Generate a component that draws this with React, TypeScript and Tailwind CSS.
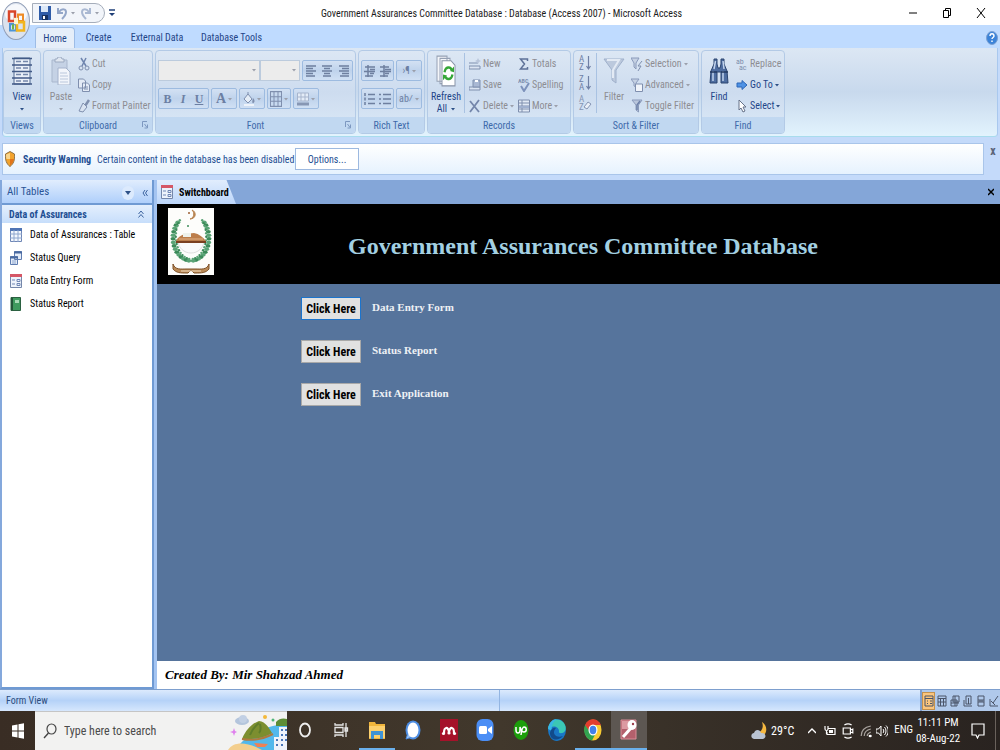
import type { ReactNode } from 'react';
import clsx from 'clsx';

const INK = '#7f8fae';

function Icon({ size = 'w-3 h-3.5', box = '0 0 12 14', children }: { size?: string; box?: string; children: ReactNode }) {
  return (
    <svg className={clsx('shrink-0', size)} viewBox={box} preserveAspectRatio="none" fill="none" aria-hidden="true">
      {children}
    </svg>
  );
}

function Caret({ dim = false }: { dim?: boolean }) {
  return (
    <svg className="w-1 h-1 shrink-0" viewBox="0 0 4 4" aria-hidden="true">
      <path d="M0 1h4L2 3.5z" fill={dim ? '#9b9fab' : '#2c4f86'} />
    </svg>
  );
}

function Launcher() {
  return (
    <button aria-label="More options" className="absolute right-1 top-1">
      <Icon size="w-1.5 h-2" box="0 0 6 8">
        <path d="M.5 6V.5H5M2.5 3l2.500 3.500M5.500 3.500V7H2.500" stroke="#7d98c0" />
      </Icon>
    </button>
  );
}

function Group({ label, width, launcher, children }: { label: string; width: string; launcher?: boolean; children: ReactNode }) {
  return (
    <section
      aria-label={label}
      className={clsx('flex flex-col shrink-0 border border-[#b3cae6] rounded-sm overflow-hidden bg-gradient-to-b from-[#dce7f4] via-[#cddcef] to-[#dbe9f7]', width)}
    >
      <div className="flex flex-1 min-h-0 pt-0.5">{children}</div>
      <div className="relative h-4 bg-[#c1d8f1] text-center text-[#3e6aaa] leading-[17px]">
        {label}
        {launcher && <Launcher />}
      </div>
    </section>
  );
}

function BigButton({ label, width, dim, caret, children }: { label: string; width: string; dim?: boolean; caret?: boolean; children: ReactNode }) {
  return (
    <button className={clsx('flex flex-col items-center pt-0.5', width, dim ? 'text-[#8d8d92]' : 'text-[#1f4588]')}>
      <span className="flex h-8 items-center">{children}</span>
      <span className="leading-5">{label}</span>
      {caret && <span className="flex h-1 items-center"><Caret dim={dim} /></span>}
    </button>
  );
}

function SmallButton({ label, icon, dim = true, caret }: { label: string; icon: ReactNode; dim?: boolean; caret?: boolean }) {
  return (
    <button className={clsx('flex items-center gap-0.5 h-[21px] whitespace-nowrap', dim ? 'text-[#8d8d92]' : 'text-[#1f4588]')}>
      {icon}
      {label}
      {caret && <Caret dim={dim} />}
    </button>
  );
}

function ToolBox({ width, tools, caret }: { width: string; tools: { name: string; art: ReactNode }[]; caret?: boolean }) {
  return (
    <div className={clsx('flex h-[21px] items-center justify-around border border-[#9dbbe0] rounded-xs bg-gradient-to-b from-[#d3e1f3] via-[#bfd3ec] to-[#d0e0f4]', width)}>
      {tools.map((t) => (
        <button key={t.name} aria-label={t.name} className="flex items-center gap-0.5 text-[#6c7fa3]">
          {t.art}
          {caret && <Caret dim />}
        </button>
      ))}
    </div>
  );
}

function Combo({ label, width }: { label: string; width: string }) {
  return (
    <div className={clsx('relative', width)}>
      <select aria-label={label} disabled className="appearance-none w-full h-[21px] bg-[#ececec] border border-[#bccbdd]" />
      <span className="pointer-events-none absolute right-1 top-2"><Caret dim /></span>
    </div>
  );
}

const lines = (d: string) => (
  <Icon>
    <path d={d} stroke="#6e7f9f" strokeWidth="1.500" />
  </Icon>
);

const alignTools = [
  { name: 'Align left', art: lines('M1 2h10M1 4.500h7M1 7h10M1 9.500h7M1 12h9') },
  { name: 'Center', art: lines('M1 2h10M3 4.500h6M1 7h10M3 9.500h6M2 12h8') },
  { name: 'Align right', art: lines('M1 2h10M4 4.500h7M1 7h10M4 9.500h7M2 12h9') },
];

const indentTools = [
  { name: 'Decrease indent', art: lines('M4 1v12M1 3h10M6 5.500h5M0 7.500h11M6 9.500h4M1 12h8') },
  { name: 'Increase indent', art: lines('M5 1v12M1 3h9M6 5.500h6M1 7.500h11M6 9.500h4M1 12h8') },
];

const listTools = [
  { name: 'Numbering', art: lines('M1 1v3M1 5.500v3M1 10v3M4 2.500h7M4 7h7M4 11.500h7') },
  { name: 'Bullets', art: lines('M0 2.500h2M0 7h2M0 11.500h2M4 2.500h8M4 7h8M4 11.500h8') },
];

function FontGroup() {
  return (
    <Group label="Font" width="w-[201px]" launcher>
      <div className="flex flex-col gap-[7px] pl-0.5 pt-[7px]">
        <div className="flex gap-0.5">
          <div className="flex">
            <Combo label="Font" width="w-[102px]" />
            <Combo label="Font size" width="w-10" />
          </div>
          <ToolBox width="w-[51px]" tools={alignTools} />
        </div>
        <div className="flex gap-0.5">
          <ToolBox
            width="w-[51px]"
            tools={[
              { name: 'Bold', art: <span className="font-['Liberation_Serif',serif] text-xs font-bold">B</span> },
              { name: 'Italic', art: <span className="font-['Liberation_Serif',serif] text-xs font-bold italic">I</span> },
              { name: 'Underline', art: <span className="font-['Liberation_Serif',serif] text-xs font-bold underline">U</span> },
            ]}
          />
          <ToolBox caret width="w-[26px]" tools={[{ name: 'Font color', art: <span className="font-['Liberation_Serif',serif] text-sm leading-4 font-bold">A</span> }]} />
          <ToolBox
            caret
            width="w-[26px]"
            tools={[{
              name: 'Fill color',
              art: (
                <Icon>
                  <path d="M5 2 1 7l4 4 4-4-4-5V0" fill="#e5edf7" stroke={INK} />
                  <path d="M10 6c2 2 2 4 .5 5S9 9 10 6z" fill={INK} />
                  <path d="M1 13h10" stroke="#eef3fa" strokeWidth="2" />
                </Icon>
              ),
            }]}
          />
          <ToolBox
            caret
            width="w-6"
            tools={[{ name: 'Gridlines', art: <Icon size="w-3 h-4"><path d="M.5.500h11v13H.5zM4 .5v13M8 .5v13M.5 5h11M.5 9h11" stroke={INK} /></Icon> }]}
          />
          <ToolBox
            caret
            width="w-[26px]"
            tools={[{
              name: 'Alternate fill',
              art: (
                <Icon>
                  <path d="M.5 1h11v8H.5zM4 1v8M8 1v8M.5 5h11" fill="#e4ecf7" stroke="#a7b5cd" />
                  <path d="M0 12h12" stroke="#8797b4" strokeWidth="3" />
                </Icon>
              ),
            }]}
          />
        </div>
      </div>
    </Group>
  );
}

function SortIcon({ top, bottom }: { top: string; bottom: string }) {
  return (
    <svg className="w-3.5 h-4" viewBox="0 0 14 16" aria-hidden="true">
      <text x="1" y="7" fontSize="9" fill="#6f80a6">{top}</text>
      <text x="1" y="15" fontSize="9" fill="#6f80a6">{bottom}</text>
      <path d="M10.500 1v12M8.500 11l2 3 2-3" fill="none" stroke="#6f80a6" strokeWidth="1.200" />
    </svg>
  );
}

const funnel = (
  <Icon>
    <path d="M1 1h10L7.500 6v7L5 11V6z" fill="#b9c6dc" stroke="#8a9abb" />
    <path d="M9 2 6 6v5" stroke="#6d80a8" strokeWidth="1.500" />
  </Icon>
);

function Ribbon() {
  return (
    <div className="flex gap-0.5 mx-0.5 h-[89px] py-0.5 rounded-b border border-t-0 border-[#a9c8ee] border-b-[#a8dced] bg-gradient-to-b from-[#dce7f4] via-[#c8d9ed] to-[#e2f3fd]">
      <Group label="Views" width="w-[38px]">
        <BigButton label="View" width="w-full" caret>
          <Icon size="w-5 h-7" box="0 0 20 28">
            <path d="M2 1h16v26H2z" fill="#e9eff8" stroke="#536a91" />
            <path d="M0 1.500h20M0 8h20M0 14.500h20M0 21h20M0 27h20" stroke="#415a86" strokeWidth="1.400" />
            <path d="M4 4.500h5M11 4.500h5M4 11h5M11 11h5M4 17.500h5M11 17.500h5M4 24h5M11 24h5" stroke="#7588aa" strokeWidth="1.500" />
          </Icon>
        </BigButton>
      </Group>
      <Group label="Clipboard" width="w-[110px]" launcher>
        <BigButton label="Paste" width="w-[34px]" dim caret>
          <Icon size="w-5 h-7" box="0 0 20 28">
            <path d="M1 3h15v22H1z" fill="#c5d2e5" stroke="#a9b7cd" />
            <path d="M4 5V2h2l1-2h3l1 2h2v3z" fill="#dfe6f0" stroke="#9caac1" />
            <path d="M7 11h8l4 4v13H7z" fill="#f2f5fb" stroke="#a4b3cc" />
            <path d="M9 16h7M9 19h8M9 22h8M9 25h8" stroke="#bac7dc" />
          </Icon>
        </BigButton>
        <div className="flex flex-col">
          <SmallButton label="Cut" icon={<Icon><path d="M3 1l5 8M8 1 4 9" stroke="#6f85ae" strokeWidth="1.500" /><circle cx="3" cy="11" r="2" stroke={INK} /><circle cx="9" cy="11" r="2" stroke={INK} /></Icon>} />
          <SmallButton label="Copy" icon={<Icon><path d="M.5 1h5l2 2v7h-7zM4.500 5h5l2 2v6.500h-7z" fill="#e3eaf5" stroke={INK} /><path d="M6 9h4M6 11h4" stroke={INK} /></Icon>} />
          <SmallButton label="Format Painter" icon={<Icon><path d="M11 1 7 7" stroke={INK} strokeWidth="2.500" /><path d="m5 4 4 4-4 5-4-1z" fill="#d9e3f1" stroke={INK} /></Icon>} />
        </div>
      </Group>
      <FontGroup />
      <Group label="Rich Text" width="w-[67px]">
        <div className="flex flex-col gap-[7px] pl-0.5 pt-[7px]">
          <div className="flex gap-0.5">
            <ToolBox width="w-[33px]" tools={indentTools} />
            <ToolBox caret width="w-[26px]" tools={[{ name: 'Text direction', art: <span className="leading-4">›¶</span> }]} />
          </div>
          <div className="flex gap-0.5">
            <ToolBox width="w-[33px]" tools={listTools} />
            <ToolBox caret width="w-[26px]" tools={[{ name: 'Highlight', art: <span className="leading-4">ab⁄</span> }]} />
          </div>
        </div>
      </Group>
      <Group label="Records" width="w-[144px]">
        <button className="flex flex-col items-center w-[37px] pt-0.5 text-[#1f4588] border-r border-[#a9c2e2] mb-1">
          <Icon size="w-5 h-8" box="0 0 20 28">
            <path d="M1 1h10v22H1zM4 3h10v22H4z" fill="#f4f6fa" stroke="#96a1b4" />
            <path d="M6 5h9l4 4v18H6z" fill="#fff" stroke="#8994a8" />
            <path d="M8.500 15c1-5 6-5 7-2M16.500 17c-1 5-6 5-7 2" stroke="#35a637" strokeWidth="2.200" />
            <path d="m14 14 4 1V10zM11 18l-4-1v5z" fill="#35a637" />
          </Icon>
          <span className="pt-1 leading-3">Refresh</span>
          <span className="flex items-center gap-1 leading-3">All <Caret /></span>
        </button>
        <div className="flex flex-col pl-1 w-[53px]">
          <SmallButton label="New" icon={<Icon><path d="M0 6h9M0 9h11v3H0z" fill="#dbe4f2" stroke={INK} /><path d="m9 1 1 2 2 1-2 1-1 2-1-2-2-1 2-1z" fill="#b8c5da" /></Icon>} />
          <SmallButton label="Save" icon={<Icon><path d="M0 9h11v3H0z" fill="#dbe4f2" stroke={INK} /><path d="M4 2h7v7H4z" fill="#a9b8d3" stroke={INK} /><path d="M6 2h3v2H6z" fill="#fff" /></Icon>} />
          <SmallButton label="Delete" caret icon={<Icon><path d="m1 2 9 11M10 1 1 13" stroke="#7486ab" strokeWidth="1.800" /></Icon>} />
        </div>
        <div className="flex flex-col">
          <SmallButton label="Totals" icon={<Icon><path d="M9.500 4V2H2.500l4 5-4 5h7v-2" stroke="#5e7299" strokeWidth="1.500" /></Icon>} />
          <SmallButton label="Spelling" icon={<Icon><text x="0" y="5" fontSize="6" fontWeight="bold" fill={INK}>ABC</text><path d="m3 8 3 5 5-8" stroke="#7d92bb" strokeWidth="2" /></Icon>} />
          <SmallButton label="More" caret icon={<Icon><path d="M.5 1h11v12H.5zM4 1v12M.5 4h11M.5 7h11M.5 10h11" fill="#e1e9f5" stroke={INK} /><path d="M1 8h10" stroke="#9fb0cf" strokeWidth="2" /></Icon>} />
        </div>
      </Group>
      <Group label="Sort & Filter" width="w-[126px]">
        <div className="flex flex-col w-[23px] items-center justify-around border-r border-[#a9c2e2] mb-1">
          <button aria-label="Sort ascending"><SortIcon top="A" bottom="Z" /></button>
          <button aria-label="Sort descending"><SortIcon top="Z" bottom="A" /></button>
          <button aria-label="Clear all sorts">
            <svg className="w-3.5 h-4" viewBox="0 0 14 16" aria-hidden="true">
              <text x="1" y="7" fontSize="9" fill="#8595b4">A</text>
              <text x="1" y="15" fontSize="9" fill="#8595b4">Z</text>
              <path d="m6 12 4-5 3 2-4 5z" fill="#eaf0f8" stroke="#8595b4" />
            </svg>
          </button>
        </div>
        <BigButton label="Filter" width="w-[34px]" dim>
          <Icon size="w-[22px] h-7" box="0 0 22 28">
            <path d="M1 2h20l-8 11v13l-4-3V13z" fill="#bcc9dd" stroke="#9fb0cb" />
            <path d="M4 3h12l-6 10v8" stroke="#e3eaf4" strokeWidth="2" />
          </Icon>
        </BigButton>
        <div className="flex flex-col">
          <SmallButton label="Selection" caret icon={<Icon><path d="M0 1h8L5 6v6L3 10V6z" fill="#c5d1e3" stroke="#8a9abb" /><path d="M11 4 7 9h3l-3 5" stroke={INK} /></Icon>} />
          <SmallButton label="Advanced" caret icon={<Icon><path d="M0 1h8L5 5v4L3 8V5z" fill="#c5d1e3" stroke="#8a9abb" /><path d="M4.500 6h7v7.500h-7z" fill="#f0f4fa" stroke={INK} /></Icon>} />
          <SmallButton label="Toggle Filter" icon={funnel} />
        </div>
      </Group>
      <Group label="Find" width="w-[84px]">
        <BigButton label="Find" width="w-[34px]">
          <Icon size="w-5 h-7" box="0 0 20 28">
            <path d="M5 2h3v5l1 4h2l1-4V2h3v5l3 7 1 12h-7V15H8v11H1l1-12 3-7z" fill="#4e6da0" stroke="#2b446f" />
            <path d="M4 14v10M14 14v10M6.500 4 5 12M14 4l1 8" stroke="#c1d3ed" strokeWidth="1.500" />
            <path d="M1 15h7M12 15h7" stroke="#20375f" strokeWidth="1.500" />
          </Icon>
        </BigButton>
        <div className="flex flex-col">
          <SmallButton label="Replace" icon={<Icon><text x="0" y="7" fontSize="8" fill={INK}>ab</text><text x="3" y="13" fontSize="8" fill={INK}>ac</text></Icon>} />
          <SmallButton label="Go To" dim={false} caret icon={<Icon><path d="M1 5h5V2.500L11 7l-5 4.500V9H1z" fill="#4e92e5" stroke="#2c66b7" /></Icon>} />
          <SmallButton label="Select" dim={false} caret icon={<Icon><path d="M3 1v10l2-2 2 4 2-1-2-4h3z" fill="#fff" stroke="#667289" /></Icon>} />
        </div>
      </Group>
    </div>
  );
}

function TitleBar() {
  return (
    <header className="relative flex h-[25px] items-center bg-white">
      <div className="ml-8 flex h-5 w-[73px] items-center gap-1.5 rounded-r-full border border-[#a5adba] bg-[#f2f5fa] pl-1.5">
        <button aria-label="Save">
          <Icon>
            <path d="M0 0h12v14H0z" fill="#2f5ca8" />
            <path d="M2 0h7v6H2z" fill="#dbe8f8" />
            <path d="M3 9h6v5H3z" fill="#17315f" /><path d="M4 10h2v3H4z" fill="#fff" />
          </Icon>
        </button>
        <button aria-label="Undo" className="flex items-center gap-1">
          <Icon size="w-2.5 h-3.5" box="0 0 10 14"><path d="M1 2v5h5M2 6c3-4 7-3 7 0S7 11 5 13" stroke="#93a6c8" strokeWidth="2" /></Icon>
          <Caret dim />
        </button>
        <button aria-label="Redo" className="flex items-center gap-1">
          <Icon size="w-2.5 h-3.5" box="0 0 10 14"><path d="M9 2v5H4M8 6C5 2 1 3 1 6s2 5 4 7" stroke="#a9b8d2" strokeWidth="2" /></Icon>
          <Caret dim />
        </button>
      </div>
      <button aria-label="Customize toolbar" className="ml-1">
        <Icon size="w-1.5 h-2" box="0 0 6 8"><path d="M0 1h6" stroke="#1f3f77" strokeWidth="1.500" /><path d="M0 4h6L3 7z" fill="#1f3f77" /></Icon>
      </button>
      <h1 className="flex-1 text-center text-[#1c1c1c] pr-5 pt-0.5">
        Government Assurances Committee Database : Database (Access 2007) - Microsoft Access
      </h1>
      <div className="flex gap-6 pr-3.5 text-black">
        <button aria-label="Minimize"><Icon size="w-2.5 h-3" box="0 0 10 12"><path d="M1 6h8" stroke="currentColor" /></Icon></button>
        <button aria-label="Restore"><Icon size="w-2.5 h-3" box="0 0 10 12"><path d="M1.500 3.500h5v7h-5zM3.500 3.500v-2h5v7h-2" stroke="currentColor" /></Icon></button>
        <button aria-label="Close"><Icon size="w-2.5 h-3" box="0 0 10 12"><path d="m1 1 8 10M9 1 1 11" stroke="currentColor" /></Icon></button>
      </div>
      <button aria-label="Office" className="absolute left-0.5 top-0.5 z-10">
        <svg className="w-7 h-[38px]" viewBox="0 0 28 36" preserveAspectRatio="none" fill="none" aria-hidden="true">
          <ellipse cx="14" cy="18" rx="13.500" ry="17.500" fill="#dbe2ee" stroke="#929fb7" />
          <ellipse cx="14" cy="11" rx="11" ry="9" fill="#f6f8fc" />
          <path d="M7 9h6v9H7z" stroke="#d9472b" strokeWidth="2.500" />
          <path d="M16 12h5v6h-5z" stroke="#ee8b26" strokeWidth="2" />
          <path d="M8 21h6v6H8z" stroke="#4d94d6" strokeWidth="2" />
          <path d="M15 19h7v8h-7z" stroke="#f1b51f" strokeWidth="2.500" />
          <path d="M10 21h2v5h-2z" fill="#6cb34a" />
          <path d="M12 15h4v6h-4z" fill="#fff6cf" />
        </svg>
      </button>
    </header>
  );
}

function Tabs() {
  return (
    <nav className="flex h-[23px] items-center bg-[#bfdbff] pl-[35px] pt-0.5 text-[#1f4588]">
      <button className="self-end h-[21px] w-10 rounded-t border border-b-0 border-[#9dbce6] bg-[#e6eef9]">Home</button>
      <button className="w-[47px]">Create</button>
      <button className="w-[70px]">External Data</button>
      <button className="w-[79px]">Database Tools</button>
      <button aria-label="Help" className="ml-auto mr-0.5">
        <svg className="w-3 h-3.5" viewBox="0 0 12 14" preserveAspectRatio="none" aria-hidden="true">
          <ellipse cx="6" cy="7" rx="5.500" ry="6.500" fill="#3c83d8" stroke="#7ba0d2" />
          <path d="M4 5c0-3 4-3 4 0 0 1.500-2 1.500-2 3M6 9.500V11" fill="none" stroke="#fff" strokeWidth="1.400" />
        </svg>
      </button>
    </nav>
  );
}

function SecurityBar() {
  return (
    <div className="mx-0.5 mt-1.5 mb-[5px] flex h-8 items-start">
      <div role="alert" className="flex h-8 flex-1 items-center border border-[#a9c5ea] bg-gradient-to-b from-white to-[#e6f2fe] pl-0.5 text-[#1f4f93]">
        <Icon size="w-2.5 h-4" box="0 0 10 16">
          <path d="M5 .5 9.500 3c.5 6-1 10-4.500 12.500C1.500 13 0 9 .5 3z" fill="#f2a32e" stroke="#8f7246" />
          <path d="M5 2v6H1.500C1 6 1 5 1 3.500z" fill="#f9d58c" /><path d="M5 8h4c-.5 3-2 5-4 6.500z" fill="#e2751b" />
        </Icon>
        <strong className="ml-2 w-[74px] whitespace-nowrap font-bold">Security Warning</strong>
        <span className="w-[198px] whitespace-nowrap">Certain content in the database has been disabled</span>
        <button className="h-[22px] w-16 border border-[#9db9e0] bg-white">Options...</button>
      </div>
      <button aria-label="Close warning" className="w-3.5 pl-1 text-xs leading-4 font-bold text-[#5b6478]">x</button>
    </div>
  );
}

const formIcon = (
  <Icon>
    <path d="M.5.500h11v13H.5z" fill="#eef3fb" stroke="#7587aa" />
    <path d="M0 1.500h12" stroke="#d55766" strokeWidth="3" />
    <path d="M2 6h3M2 10h3M7 5.500h3v2H7zM7 9.500h3v2H7z" stroke="#6f86b5" />
  </Icon>
);

const navItems = [
  {
    label: 'Data of Assurances : Table',
    icon: (
      <Icon>
        <path d="M.5.500h11v13H.5z" fill="#f3f7fd" stroke="#6f86b5" />
        <path d="M0 1.500h12" stroke="#4f74b4" strokeWidth="3" />
        <path d="M4 2v12M8 2v12M0 6h12M0 10h12" stroke="#8ea6ce" />
      </Icon>
    ),
  },
  {
    label: 'Status Query',
    icon: (
      <Icon>
        <path d="M4.500.500h7v8h-7zM.5 5.500h7v8h-7z" fill="#e4ecf8" stroke="#5f7cb0" />
        <path d="M4 1.500h8M0 6.500h8" stroke="#48699f" strokeWidth="2" />
        <path d="M2 10h4M2 12h4" stroke="#8ea6ce" />
      </Icon>
    ),
  },
  { label: 'Data Entry Form', icon: formIcon },
  {
    label: 'Status Report',
    icon: (
      <Icon>
        <path d="M1 .5h9.500v13H1z" fill="#3f9a5e" stroke="#2b6141" />
        <path d="M2 1v12" stroke="#245438" strokeWidth="2" /><path d="M5 3h4v3H5z" fill="#a8dab6" />
      </Icon>
    ),
  },
];

function NavPane() {
  return (
    <aside className="flex w-[154px] shrink-0 flex-col border-x-2 border-b-2 border-[#6f9ad3] border-l-[#84a8dc] bg-white">
      <div className="flex h-[25px] items-center border-b-2 border-[#6f9ad3] bg-gradient-to-b from-[#e1edfd] to-[#afcffb] pl-[5px] pt-0.5 text-[11px] text-[#2b5596]">
        <h2 className="flex-1">All Tables</h2>
        <button aria-label="Choose objects" className="flex h-3.5 w-3 items-center justify-center rounded-full bg-[#dceafd]">
          <Icon size="w-1.5 h-1" box="0 0 6 4"><path d="M0 0h6L3 4z" fill="#2f5288" /></Icon>
        </button>
        <button aria-label="Collapse pane" className="ml-1 flex w-3.5 justify-center">
          <Icon size="w-1.5 h-2" box="0 0 6 8"><path d="M3 1 1 4l2 3M5.500 1l-2 3 2 3" stroke="#3c64a0" /></Icon>
        </button>
      </div>
      <button className="flex h-[18px] items-center justify-between bg-gradient-to-b from-[#e4effd] to-[#c7defb] pl-[7px] pr-2 font-bold text-[#1f4f93]">
        Data of Assurances
        <Icon size="w-1.5 h-2" box="0 0 6 8"><path d="m.5 4 2.500-3 2.500 3M.5 7.500l2.500-3 2.500 3" stroke="#3c64a0" /></Icon>
      </button>
      <ul>
        {navItems.map((item) => (
          <li key={item.label}>
            <button className="flex h-[23px] w-full items-center gap-2 pl-2 text-black whitespace-nowrap">
              {item.icon}
              {item.label}
            </button>
          </li>
        ))}
      </ul>
    </aside>
  );
}

function Emblem() {
  const leaves = Array.from({ length: 15 }, (_, i) => {
    const a = -0.75 + (i / 14) * 2.2;
    return { x: Math.cos(a) * 18, y: 30 + Math.sin(a) * 23 };
  });
  return (
    <svg className="w-[46px] h-[67px]" viewBox="0 0 46 67" role="img" aria-label="Assembly emblem">
      <rect width="46" height="67" fill="#fdfdfb" />
      <path d="M24 2c5 2 4 9-2 9 4-1 5-6 2-9z" fill="#b98552" stroke="#b98552" />
      <circle cx="21" cy="5" r="1" fill="#9b5e33" />
      <circle cx="20" cy="18" r="1" fill="#3e8d5b" />
      {leaves.map((l, i) => (
        <g key={i} fill={i % 2 ? '#3c8b5a' : '#5aa476'}>
          <ellipse cx={23 + l.x} cy={l.y} rx="2.500" ry="1.800" />
          <ellipse cx={23 - l.x} cy={l.y} rx="2.500" ry="1.800" />
          <circle cx={23 + l.x * 0.85} cy={l.y - 2} r="1.200" />
          <circle cx={23 - l.x * 0.85} cy={l.y - 2} r="1.200" />
        </g>
      ))}
      <path d="M10 34c1 6 6 11 13 11s12-5 13-11" fill="#fafafa" stroke="#dedede" />
      <path d="M8 33c2-4 5-6 9-7l9-1c5 1 9 4 12 8z" fill="#bc7e4c" />
      <path d="M15 25h8v4h-8z" fill="#eef2ec" />
      <path d="M8 34h30" stroke="#7a4020" strokeWidth="2" />
      <path d="M11 31h24" stroke="#e0b287" />
      <path d="M5 56c2 6 8 5 13 5h10c5 0 11 1 13-5v5c-3 4-8 4-13 4h-2l-3-3-3 3h-2c-5 0-10 0-13-4z" fill="#b98956" stroke="#7d5027" />
      <path d="M13 63h20" stroke="#f1dcc0" />
    </svg>
  );
}

const actions = ['Data Entry Form', 'Status Report', 'Exit Application'];

function Switchboard() {
  return (
    <main className="ml-[3px] flex min-w-0 flex-1 flex-col">
      <div className="flex h-6 items-center justify-between bg-[#84a6d8]">
        <button className="flex h-full w-[79px] items-center gap-1.5 bg-gradient-to-b from-[#e1edfd] to-[#bcd6fa] pl-1 font-bold text-black [clip-path:polygon(0_0,88%_0,100%_100%,0_100%)]">
          {formIcon}
          Switchboard
        </button>
        <button aria-label="Close tab" className="mr-1.5">
          <Icon size="w-1.5 h-2" box="0 0 6 8"><path d="m0 1 6 6M6 1 0 7" stroke="#000" strokeWidth="1.500" /></Icon>
        </button>
      </div>
      <div className="flex h-20 items-start bg-black pl-[11px] pt-1">
        <Emblem />
        <h2 className="flex-1 pt-[22px] pr-12 text-center font-['Liberation_Serif',serif] text-2xl leading-8 font-bold text-[#a3d0e2]">
          Government Assurances Committee Database
        </h2>
      </div>
      <ul className="flex flex-1 flex-col gap-5 bg-[#56749c] pl-36 pt-[13px]">
        {actions.map((action, i) => (
          <li key={action} className="flex h-[23px] items-center gap-[11px]">
            <button
              aria-labelledby={`action-${i}`}
              className={clsx('h-[23px] w-[60px] border bg-[#e1e1e1] text-xs font-bold text-black', i === 0 ? 'border-[#1c74cc]' : 'border-[#a9a9a9]')}
            >
              Click Here
            </button>
            <span id={`action-${i}`} className="pb-0.5 font-['Liberation_Serif',serif] text-[11px] font-bold text-[#eef1f5]">{action}</span>
          </li>
        ))}
      </ul>
      <p className="h-7 bg-white pl-2 font-['Liberation_Serif',serif] text-[13px] leading-7 font-bold italic text-black">
        Created By: Mir Shahzad Ahmed
      </p>
    </main>
  );
}

const viewModes = [
  { name: 'Form View', d: 'M1 1h8v10H1zM1 3.500h8M3 6h1M6 6h2M3 8.500h1M6 8.500h2' },
  { name: 'Datasheet View', d: 'M1 1h8v10H1zM1 3.500h8M3.500 3v8M6.500 3v8M1 7h8' },
  { name: 'PivotTable View', d: 'M3 1h6v6H3zM1 5h6v6H1zM1 8h8M5 1v10' },
  { name: 'PivotChart View', d: 'M3 1h5v8H3zM1 11h8M1 5v6M5.500 3v6' },
  { name: 'Layout View', d: 'M2 1h6v4H2zM2 7h6v4H2zM1 6h8' },
  { name: 'Design View', d: 'M1 4v7h8M9 1 4 8M2 6l4 4' },
];

function StatusBar() {
  return (
    <footer className="flex h-[22px] items-center border-t border-[#7d9fce] bg-gradient-to-b from-[#dceafd] via-[#b5d2f8] to-[#d6e7fd] text-[#2c4d7e]">
      <span className="flex h-full w-1/2 items-center border-r border-[#93b5e2] pl-1.5">Form View</span>
      <span className="flex-1" />
      <div className="flex h-full items-center border-l-2 border-[#7f9fce] bg-[#b0c9eb]">
        {viewModes.map((mode, i) => (
          <button key={mode.name} aria-label={mode.name} className={clsx('flex h-[18px] w-[13px] items-center justify-center', i === 0 && 'bg-[#fbc57d] border border-[#c4914d]')}>
            <Icon size="w-2.5 h-3" box="0 0 10 12"><path d={mode.d} stroke="#4a5468" /></Icon>
          </button>
        ))}
      </div>
    </footer>
  );
}

const apps: { name: string; open?: boolean; active?: boolean; art: ReactNode }[] = [
  { name: 'Cortana', art: <ellipse cx="10" cy="12" rx="5" ry="6.500" stroke="#eee" strokeWidth="1.800" /> },
  {
    name: 'Task View',
    art: <path d="M4 5v2h8V5M4 9.500h8v5H4zM4 19v-2h8v2M15 5v14M14 10h2.500v3H14z" stroke="#e4e4e4" strokeWidth="1.300" />,
  },
  {
    name: 'File Explorer',
    open: true,
    art: (
      <>
        <path d="M2 4h6l1 2h9v15H2z" fill="#f0b53c" />
        <path d="M2 8h16v12H2z" fill="#fcd06e" />
        <path d="M4 21v-8h12v8h-3v-4H7v4z" fill="#3f93d6" />
      </>
    ),
  },
  { name: 'Signal', art: <><ellipse cx="10" cy="12" rx="7.500" ry="9.500" fill="#4d8de2" /><path d="m3 21 2-6 4 4z" fill="#9cc4f5" stroke="#4d8de2" /><ellipse cx="10" cy="12" rx="5.500" ry="7.500" fill="#fff" /></> },
  {
    name: 'Mendeley',
    art: (
      <>
        <path d="M1 1h18v22H1z" fill="#a5122a" />
        <path d="M5 15c0-6 4-7 5-1 1-6 5-5 5 1" stroke="#fff" strokeWidth="2.200" />
        <circle cx="4.500" cy="15.500" r="1.600" fill="#fff" /><circle cx="10" cy="15" r="1.600" fill="#fff" /><circle cx="15.500" cy="15.500" r="1.600" fill="#fff" />
      </>
    ),
  },
  { name: 'Zoom', art: <><rect x="1.500" y="1" width="17" height="22" rx="6" fill="#4b8ef5" /><rect x="4" y="8" width="8" height="8" rx="1.500" fill="#fff" /><path d="m13 11 4-3v8l-4-3z" fill="#fff" /></> },
  { name: 'Upwork', art: <><ellipse cx="10" cy="12" rx="7.500" ry="10" fill="#1c9e0b" /><path d="M5 9v3c0 4 4 4 4 0V9c1 3 2 5 4 5 3 0 3-5 0-5-2 0-2.500 4-3 8" stroke="#fff" strokeWidth="1.500" /></> },
  {
    name: 'Edge',
    art: (
      <>
        <ellipse cx="10" cy="12" rx="9" ry="11" fill="#1976c5" />
        <path d="M1 11C2 3 8 0 13 2c5 2 7 8 5 11-2 3-7 3-6 0 0-4-6-7-11-2z" fill="#3bc7b4" />
        <path d="M1 11C2 4 6 1 10 1c-4 2-6 8-5 12z" fill="#38b6e6" />
        <path d="M9 10c-5 5 0 11 7 8-4 5-12 5-13-2 0-4 3-7 6-6z" fill="#114a8b" />
      </>
    ),
  },
  {
    name: 'Chrome',
    open: true,
    art: (
      <>
        <ellipse cx="10" cy="12" rx="8.500" ry="10.500" fill="#f9cb32" />
        <path d="M2 7c4-8 13-7 16 0h-8l-4 7z" fill="#e33d2e" />
        <path d="M2 7c-3 8 2 15 7 15.500L13 15l-6-1z" fill="#32a350" />
        <ellipse cx="10" cy="12" rx="4.500" ry="5.500" fill="#fff" /><ellipse cx="10" cy="12" rx="3.300" ry="4.200" fill="#427fea" />
      </>
    ),
  },
  {
    name: 'Access',
    open: true,
    active: true,
    art: (
      <>
        <path d="M2 2h15v19H2z" fill="#b3606c" stroke="#d98d96" />
        <path d="M3 3h7v8H3z" fill="#dc9aa2" />
        <path d="m4 19 8-9" stroke="#fff" strokeWidth="3" /><ellipse cx="13" cy="7" rx="4.500" ry="5" fill="#fff" /><circle cx="14" cy="6" r="1.200" fill="#9d3d4a" />
      </>
    ),
  },
];

function Taskbar() {
  return (
    <div className="flex h-[39px] shrink-0 items-stretch bg-gradient-to-r from-[#392d24] via-[#41382c] to-[#292320] text-xs text-white">
      <button aria-label="Start" className="flex w-[35px] items-center justify-center">
        <Icon size="w-3 h-4" box="0 0 12 16"><path d="M0 2.500 5.500 1.500V7.500H0zM6.500 1.300 12 .3V7.500H6.500zM0 8.500h5.500v6L0 13.500zM6.500 8.500H12v7.200l-5.500-1z" fill="#fff" /></Icon>
      </button>
      <label className="flex w-[252px] items-center border-t border-[#c5c5c5] bg-[#f2f2f1] pl-2 text-[#444]">
        <Icon size="w-3.5 h-4" box="0 0 14 16"><ellipse cx="8.500" cy="6" rx="4.500" ry="5" stroke="#444" strokeWidth="1.200" /><path d="M5.500 10 1 15" stroke="#444" strokeWidth="1.400" /></Icon>
        <input aria-label="Search" placeholder="Type here to search" className="ml-[7px] min-w-0 flex-1 bg-transparent text-xs outline-none placeholder:text-[#4b4b4b]" />
        <svg className="h-[38px] w-[59px] shrink-0" viewBox="0 0 59 38" aria-hidden="true">
          <ellipse cx="14" cy="9" rx="7" ry="4" fill="#b4c5dc" /><circle cx="15" cy="7" r="4" fill="#c2d0e4" />
          <path d="m6 16 1 3 2 1-2 1-1 3-1-3-3-1 3-1z" fill="#df80ed" />
          <circle cx="37" cy="5" r="2" fill="#f4b93a" /><circle cx="45" cy="8" r="1.500" fill="#4fb676" />
          <path d="M8 38c4-8 12-15 25-20 12-5 20-6 26-6v26z" fill="#52b8eb" />
          <path d="M0 38c5-8 16-8 28-3l6 3z" fill="#f3ce8d" />
          <path d="M14 27c4-9 9-15 17-18 7 1 10 7 13 12-7 5-21 7-30 6z" fill="#7c8e2f" />
          <path d="M22 23c2-5 5-9 9-12M31 21c2-2 2-5 1-9" stroke="#5f7d2a" strokeWidth="2" fill="none" />
          <path d="M14 27c10 2 21 0 31-5" stroke="#b0793f" strokeWidth="2" fill="none" />
          <path d="M48 10c3-4 8-4 11-3v7H48z" fill="#5c8d35" />
          <path d="M51 15h8v23H46V25h5z" fill="#eff3fa" />
          <path d="M53 18h2M57 18h2M53 23h2M57 23h2M48 28h2M53 28h2M57 28h2M48 33h2M53 33h2" stroke="#4a76b7" strokeWidth="2" />
          <path d="m26 31 14 1-3 3h-8z" fill="#ef8154" />
        </svg>
      </label>
      {apps.map((app) => (
        <button
          key={app.name}
          aria-label={app.name}
          className={clsx('flex w-9 items-center justify-center border-b-2', app.active && 'bg-[#5d5752]', app.open ? 'border-[#6ab0ec]' : 'border-transparent')}
        >
          <Icon size="w-5 h-6" box="0 0 20 24">{app.art}</Icon>
        </button>
      ))}
      <div className="ml-auto flex items-center gap-0.5 pr-1">
        <button className="flex items-center gap-1 pr-2">
          <Icon size="w-4 h-5" box="0 0 16 20"><path d="M11 1c5 3 6 10 1 14l-6-3c5-1 7-6 5-11z" fill="#f5b840" /><path d="M3 18c-4-1-3-6 0-6 1-4 6-4 7 0 5-1 6 5 2 6z" fill="#b9c3d2" /></Icon>
          29°C
        </button>
        <button aria-label="Show hidden icons" className="px-1"><Icon size="w-2 h-2" box="0 0 8 8"><path d="m0 6 4-4 4 4" stroke="#fff" strokeWidth="1.300" /></Icon></button>
        <button aria-label="Battery" className="px-0.5"><Icon size="w-3 h-3" box="0 0 12 12"><path d="M4 3.500h7v6H3V7M1 1v3c0 2 3 2 3 0V1M2.500 6v3" stroke="#fff" strokeWidth="1.200" /><path d="M5 5h4v3H5z" fill="#fff" /></Icon></button>
        <button aria-label="Meet Now" className="px-0.5"><Icon size="w-3 h-4" box="0 0 10 16"><path d="M1 5h6v6H1zM7 7l2-1v4L7 9M2 2c2-1.500 4-1.500 6 0M2 14c2 1.500 4 1.500 6 0" stroke="#fff" /></Icon></button>
        <button aria-label="Network" className="px-0.5"><Icon size="w-3 h-3.5" box="0 0 10 14"><path d="M1 12C1 6 4 3 9 2M3.500 12c0-4 2-6 5.500-7M6 12c0-2 1-3 3-4" stroke="#a8a39e" /><circle cx="8.500" cy="12" r="1.300" fill="#fff" /></Icon></button>
        <button aria-label="Volume"><Icon size="w-3 h-3.5" box="0 0 12 14"><path d="M0 5h2.500L5 2v10L2.500 9H0zM7 5c1 1 1 3 0 4M8.500 3c2 2 2 6 0 8M10 1.500c3 3 3 8 0 11" stroke="#fff" /></Icon></button>
        <button className="pl-1 text-[11px]">ENG</button>
        <button className="w-[46px] whitespace-nowrap text-center text-[11px] leading-4">
          11:11 PM
          <br />
          08-Aug-22
        </button>
        <button aria-label="Notifications" className="px-2"><Icon size="w-3.5 h-4" box="0 0 14 16"><path d="M1 1h12v11H8l-1.500 3L5 12H1z" stroke="#fff" strokeWidth="1.200" /></Icon></button>
        <span className="h-full border-l border-[#6a625c]" />
      </div>
    </div>
  );
}

export default function App() {
  return (
    <div className="flex h-screen flex-col overflow-hidden bg-[#c4dafa] font-['Roboto_Condensed',Roboto,sans-serif] text-[10px]">
      <TitleBar />
      <Tabs />
      <Ribbon />
      <SecurityBar />
      <div className="flex min-h-0 flex-1 bg-[#a4c4f1]">
        <NavPane />
        <Switchboard />
      </div>
      <StatusBar />
      <Taskbar />
    </div>
  );
}
